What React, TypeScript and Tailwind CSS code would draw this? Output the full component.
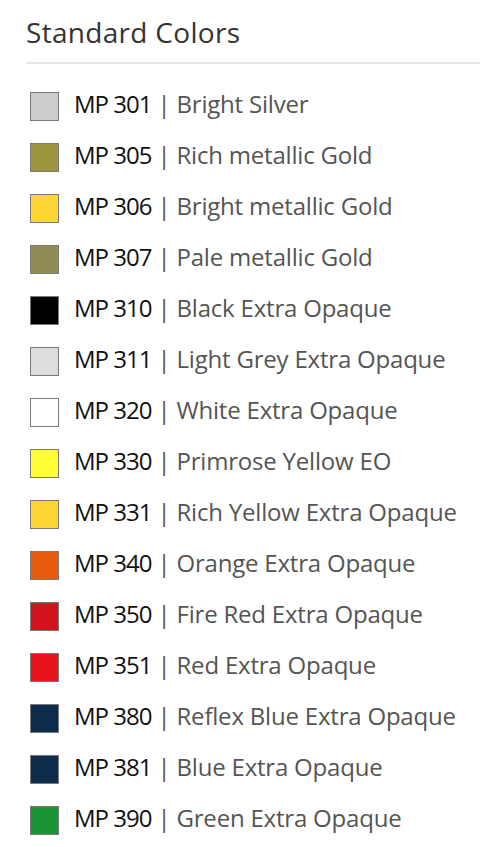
import React from "react";

const colors: { code: string; name: string; color: string }[] = [
  { code: "MP 301", name: "Bright Silver", color: "#cccccc" },
  { code: "MP 305", name: "Rich metallic Gold", color: "#9d9440" },
  { code: "MP 306", name: "Bright metallic Gold", color: "#fdd535" },
  { code: "MP 307", name: "Pale metallic Gold", color: "#8f8d52" },
  { code: "MP 310", name: "Black Extra Opaque", color: "#000000" },
  { code: "MP 311", name: "Light Grey Extra Opaque", color: "#dddddd" },
  { code: "MP 320", name: "White Extra Opaque", color: "#ffffff" },
  { code: "MP 330", name: "Primrose Yellow EO", color: "#ffff33" },
  { code: "MP 331", name: "Rich Yellow Extra Opaque", color: "#fed533" },
  { code: "MP 340", name: "Orange Extra Opaque", color: "#e95b0c" },
  { code: "MP 350", name: "Fire Red Extra Opaque", color: "#d2141e" },
  { code: "MP 351", name: "Red Extra Opaque", color: "#e8141b" },
  { code: "MP 380", name: "Reflex Blue Extra Opaque", color: "#0d2c4a" },
  { code: "MP 381", name: "Blue Extra Opaque", color: "#0f2d4b" },
  { code: "MP 390", name: "Green Extra Opaque", color: "#1b9436" },
];

export default function App() {
  return (
    <div
      className="w-[480px] h-[847px] bg-white overflow-hidden pl-[26px] pt-[14px]"
      style={{ fontFamily: '"Open Sans", "Noto Sans", sans-serif' }}
    >
      <h2 className="text-[28px] leading-[36px] text-[#333333] tracking-[0.3px]">
        Standard Colors
      </h2>
      <div className="mt-[12px] border-t-2 border-[#e6e6e6]" />
      <ul className="mt-[16px] flex flex-col">
        {colors.map((c) => (
          <li key={c.code} className="h-[51px] flex items-center pl-[4px]">
            <span
              className="w-[29px] h-[29px] border border-[#7a7a7a] shrink-0 mt-[1px]"
              style={{ backgroundColor: c.color }}
            />
            <span className="ml-[15px] mb-[3px] text-[24px] leading-[32px] whitespace-nowrap">
              <span className="text-[#111111] tracking-[-1px]">{c.code}</span>
              <span className="text-[#555555] tracking-[-0.2px]"> | {c.name}</span>
            </span>
          </li>
        ))}
      </ul>
    </div>
  );
}
